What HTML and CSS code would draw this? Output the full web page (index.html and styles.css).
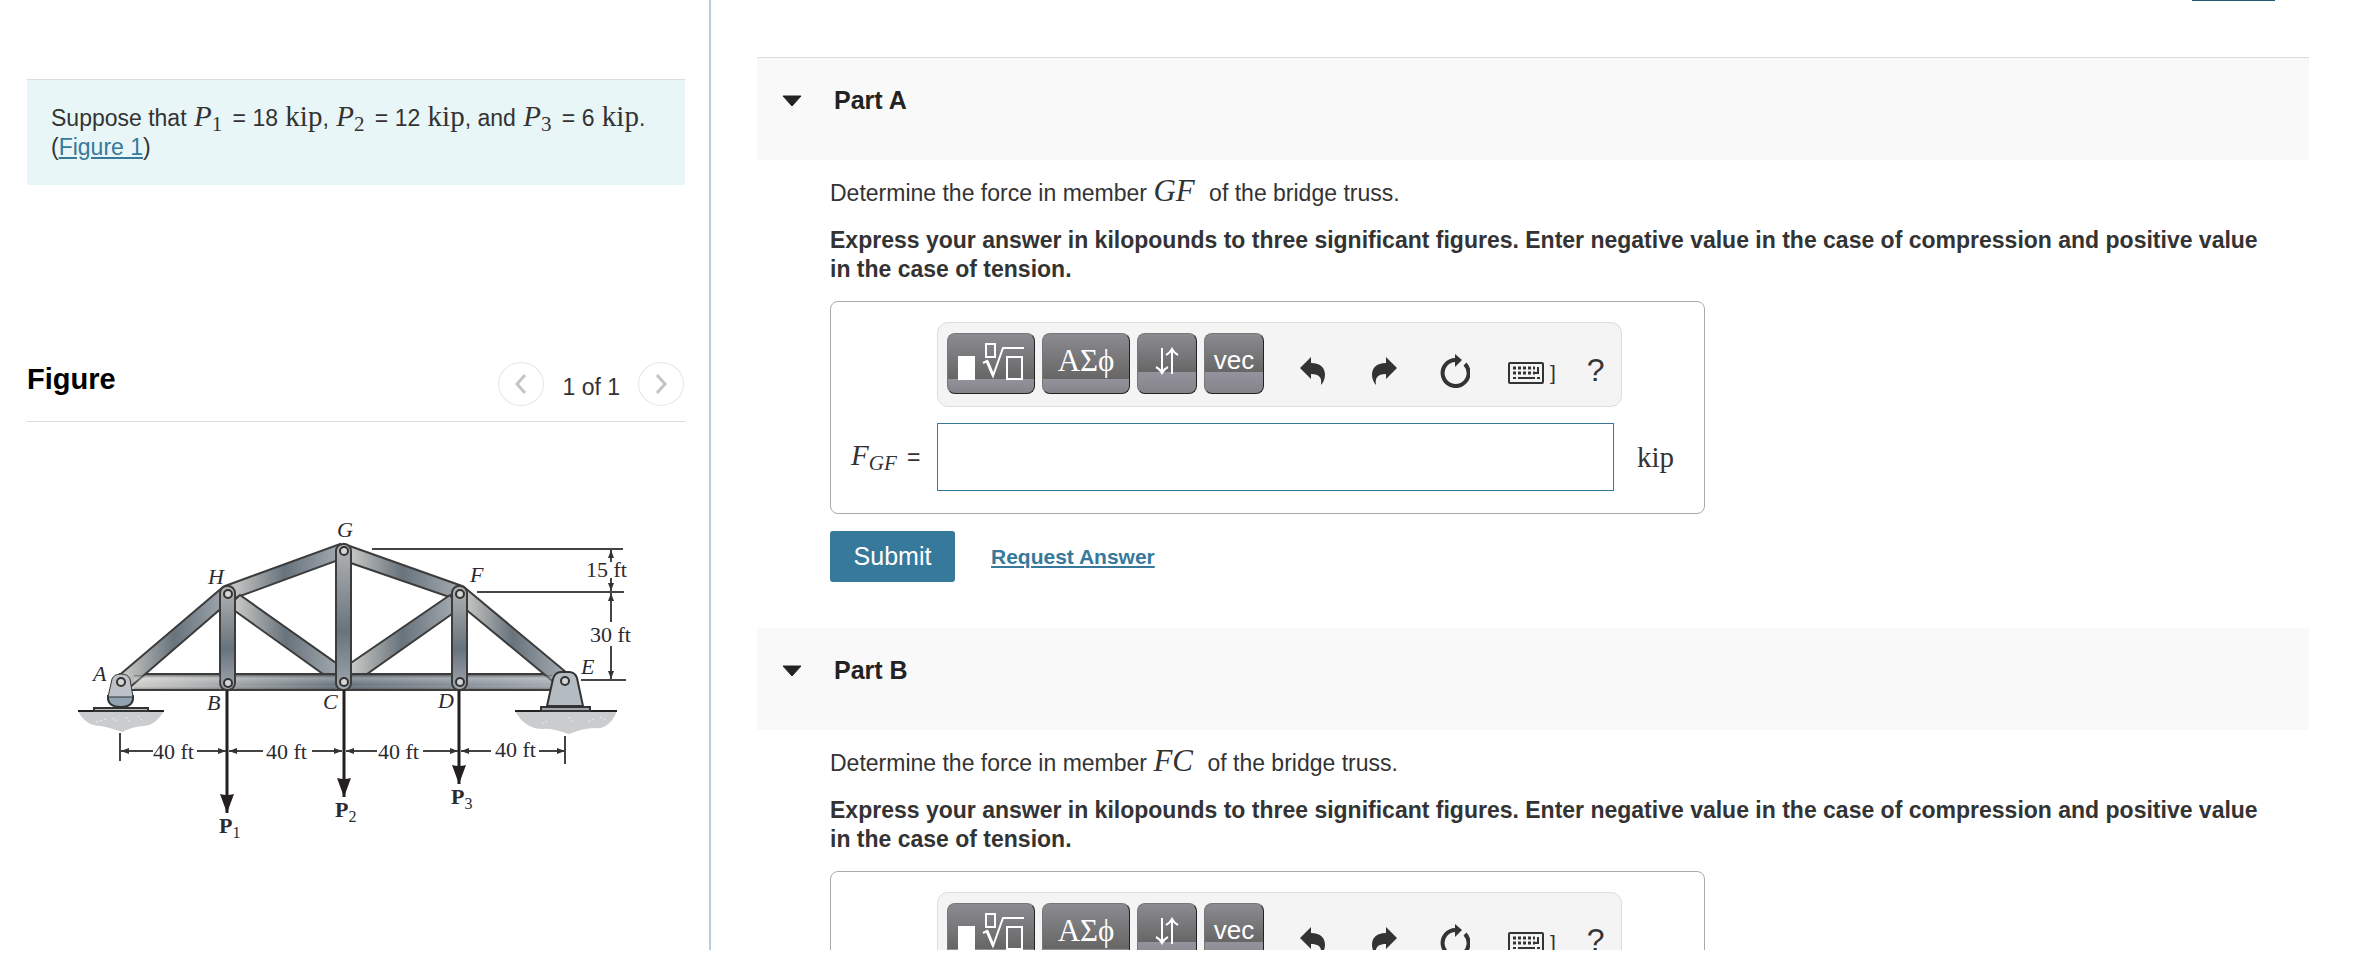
FILE: index.html
```html
<!DOCTYPE html>
<html lang="en">
<head>
  <meta charset="UTF-8">
  <meta name="viewport" content="width=device-width, initial-scale=1.0">
  <title>Bridge Truss</title>
  <link rel="stylesheet" href="styles.css">
</head>
<body>
  <!-- shared icons -->
  <svg class="defs" width="0" height="0" aria-hidden="true">
    <symbol id="caret" viewBox="0 0 20 12"><path d="M1 1h18l-9 10z" fill="#222" stroke="#222" stroke-linejoin="round"/></symbol>
    <symbol id="template" viewBox="0 0 68 40">
      <path d="M1 15h17v24H1z" fill="#fff"/>
      <path d="M29 3h9v13h-9zM50 16h15v22H50z" fill="none" stroke="#fff" stroke-width="2"/>
      <path d="M26 22l4-2 6 15 10-28h21" fill="none" stroke="#fff" stroke-width="2"/>
      <path d="M30 20l6 14" stroke="#fff" stroke-width="3"/>
    </symbol>
    <symbol id="updown" viewBox="0 0 24 28">
      <path d="M7 1v25M1 20q4 2 6 6 2-4 6-6M17 27V2M11 8q4-2 6-6 2 4 6 6" fill="none" stroke="#fff" stroke-width="2"/>
    </symbol>
    <symbol id="undo" viewBox="0 0 26 28"><path d="M0 11L11 0v6c10 0 14 5 14 12 0 4-2 8-4 10 1-7-1-11-10-11v5z" fill="#333"/></symbol>
    <symbol id="redo" viewBox="0 0 26 28"><path d="M26 11L15 0v6C5 6 1 11 1 18c0 4 2 8 4 10-1-7 1-11 10-11v5z" fill="#333"/></symbol>
    <symbol id="reset" viewBox="0 0 30 34">
      <path d="M16 6A13 13 0 1 0 25 10" fill="none" stroke="#333" stroke-width="4"/>
      <path d="M15 0l7 6-7 7z" fill="#333"/>
    </symbol>
    <symbol id="keyboard" viewBox="0 0 36 22">
      <rect x="1" y="1" width="34" height="20" rx="1" fill="none" stroke="#333" stroke-width="2"/>
      <path d="M5 6h22M5 11h22" fill="none" stroke="#333" stroke-width="3" stroke-dasharray="3 2"/>
      <path d="M30 5v6h-4M5 16h3M10 16h17M29 16h3" fill="none" stroke="#333" stroke-width="2"/>
    </symbol>
  </svg>

  <div class="page">
    <aside class="side">
      <section class="problem">
        Suppose that <span class="math"><i>P</i><sub>1</sub></span> = 18 <span class="math">kip</span>, <span class="math"><i>P</i><sub>2</sub></span> = 12 <span class="math">kip</span>, and <span class="math"><i>P</i><sub>3</sub></span> = 6 <span class="math">kip</span>.<br>
        (<a href="#figure">Figure 1</a>)
      </section>

      <section id="figure">
        <header class="figure-head">
          <h2>Figure</h2>
          <nav class="pager">
            <button type="button" aria-label="Previous figure"><svg width="12" height="20" viewBox="0 0 12 20"><path d="M10 1L2 10l8 9"/></svg></button>
            <span>1 of 1</span>
            <button type="button" aria-label="Next figure"><svg width="12" height="20" viewBox="0 0 12 20"><path d="M2 1l8 9-8 9"/></svg></button>
          </nav>
        </header>

        <svg class="truss" width="600" height="350" viewBox="0 0 600 350" role="img" aria-label="Bridge truss">
          <defs>
            <linearGradient id="steel">
              <stop offset="0" stop-color="#d6d5d0"/><stop offset=".5" stop-color="#68737c"/><stop offset="1" stop-color="#a7adb4"/>
            </linearGradient>
            <linearGradient id="steelV" x2="0" y2="1">
              <stop offset="0" stop-color="#b3b5b6"/><stop offset=".6" stop-color="#68737c"/><stop offset="1" stop-color="#a0a8b0"/>
            </linearGradient>
            <linearGradient id="shine" x2="0" y2="1">
              <stop offset="0" stop-color="#333" stop-opacity=".5"/><stop offset=".25" stop-color="#fff" stop-opacity=".25"/><stop offset=".7" stop-color="#fff" stop-opacity="0"/><stop offset="1" stop-color="#333" stop-opacity=".3"/>
            </linearGradient>
            <marker id="tip" viewBox="0 0 8 6" markerWidth="8" markerHeight="6" refX="8" refY="3" orient="auto-start-reverse" markerUnits="userSpaceOnUse">
              <path d="M0 0l8 3-8 3z" fill="#333"/>
            </marker>
            <marker id="load" viewBox="0 0 19 14" markerWidth="19" markerHeight="14" refX="19" refY="7" orient="auto" markerUnits="userSpaceOnUse">
              <path d="M0 0q2 7 0 14l19-7z" fill="#231f20"/>
            </marker>
          </defs>

          <!-- ground -->
          <path d="M18 211h86q-8 14-20 15-10 0-22 6-14-5-22-6-14 0-22-15z" fill="#cbccce"/>
          <path d="M455 211h102q-8 19-22 17-12 0-26 6-18-6-26-5-18 0-28-18z" fill="#cbccce"/>
          <path d="M36 222l10-3M52 218l6 3M66 217l4 5M78 216l6 6M482 224l6-3M509 217l3 5M528 222l6-3M540 217l6 3" stroke="#f0f0f0" stroke-dasharray="2 2"/>
          <path d="M18 211h86M455 211h102" stroke="#222" stroke-width="2"/>

          <!-- members -->
          <g stroke="#3c3c3c" stroke-width="2">
            <path d="M60 174h445v16H60z" fill="url(#steel)"/>
            <path d="M163 87L56 178l12 11L172 99z" fill="url(#steel)"/>
            <path d="M165 86L280 44l4 14-112 41z" fill="url(#steel)"/>
            <path d="M284 44l118 42-4 14-116-40z" fill="url(#steel)"/>
            <path d="M180 95l103 73-2 6h-18l-95-68z" fill="url(#steel)"/>
            <path d="M390 95l-105 72v7h22l92-65z" fill="url(#steel)"/>
            <path d="M404 87l103 86-6 15-103-85z" fill="url(#steel)"/>
            <rect x="160" y="86" width="15" height="104" rx="7" fill="url(#steelV)"/>
            <rect x="276" y="44" width="15" height="146" rx="7" fill="url(#steelV)"/>
            <rect x="392" y="86" width="15" height="104" rx="7" fill="url(#steelV)"/>
          </g>
          <path d="M74 175h86v14H74zM176 175h99v14h-99zM292 175h99v14h-99zM408 175h84v14h-84z" fill="url(#shine)"/>

          <!-- supports -->
          <g stroke="#333" stroke-width="2">
            <path d="M34 208h54v3H34z" fill="#b9bfc3"/>
            <path d="M48 196q-1 11 13 11 13 0 12-11z" fill="#8fa3b1"/>
            <path d="M48 197l4-18q2-5 9-5t9 5l3 18z" fill="#bcc2c7" stroke-width="1"/>
            <path d="M481 207h49v4h-49z" fill="#9fa7ac"/>
            <path d="M487 206l6-27q2-7 8-7h8q6 0 8 6l6 28z" fill="#b5bcc1"/>
          </g>

          <!-- pins -->
          <g fill="#d5d5d5" stroke="#333" stroke-width="2">
            <circle cx="61" cy="182" r="4"/><circle cx="168" cy="94" r="4"/><circle cx="168" cy="183" r="4"/>
            <circle cx="284" cy="51" r="4"/><circle cx="284" cy="182" r="4"/><circle cx="400" cy="94" r="4"/>
            <circle cx="400" cy="182" r="4"/><circle cx="505" cy="181" r="4"/>
          </g>

          <!-- loads -->
          <g stroke="#231f20" stroke-width="3">
            <path d="M167 190v123" marker-end="url(#load)"/>
            <path d="M284 190v107" marker-end="url(#load)"/>
            <path d="M399 190v94" marker-end="url(#load)"/>
          </g>

          <!-- dimensions -->
          <g stroke="#444" stroke-width="2">
            <path d="M60 233v28M505 236v28M312 49h251M417 92h147M521 180h45" />
            <g marker-start="url(#tip)">
              <path d="M61 251h32"/><path d="M169 251h34"/><path d="M286 251h31"/><path d="M401 251h30"/>
              <path d="M551 50v12"/><path d="M551 93v29"/>
            </g>
            <g marker-end="url(#tip)">
              <path d="M137 251h29"/><path d="M252 251h30"/><path d="M363 251h35"/><path d="M479 251h26"/>
              <path d="M551 78v13"/><path d="M551 146v33"/>
            </g>
          </g>
          <g class="dims">
            <text x="93" y="259">40 ft</text><text x="206" y="259">40 ft</text><text x="318" y="259">40 ft</text><text x="435" y="257">40 ft</text>
            <text x="526" y="77">15 ft</text><text x="530" y="142">30 ft</text>
          </g>
          <g class="joints">
            <text x="33" y="181">A</text><text x="147" y="210">B</text><text x="263" y="209">C</text><text x="378" y="208">D</text>
            <text x="521" y="174">E</text><text x="410" y="82">F</text><text x="277" y="37">G</text><text x="148" y="84">H</text>
          </g>
          <g class="forces">
            <text x="159" y="333">P<tspan class="idx" dy="5">1</tspan></text>
            <text x="275" y="317">P<tspan class="idx" dy="5">2</tspan></text>
            <text x="391" y="304">P<tspan class="idx" dy="5">3</tspan></text>
          </g>
        </svg>
      </section>
    </aside>

    <main class="content">
      <div class="top"><span class="top-link"></span></div>

      <section class="part">
        <h2 class="part-head first"><button type="button"><svg width="20" height="12"><use href="#caret"/></svg>Part A</button></h2>
        <div class="part-body">
          <p>Determine the force in member <i class="math member">GF</i> of the bridge truss.</p>
          <p class="instructions">Express your answer in kilopounds to three significant figures. Enter negative value in the case of compression and positive value in the case of tension.</p>
          <form>
            <div class="answer">
              <div class="toolbar">
                <button type="button" class="key wide" aria-label="Templates"><svg width="68" height="40"><use href="#template"/></svg></button>
                <button type="button" class="key wide greek">ΑΣϕ</button>
                <button type="button" class="key" aria-label="Subscript and superscript"><svg width="24" height="28"><use href="#updown"/></svg></button>
                <button type="button" class="key">vec</button>
                <div class="tools">
                  <button type="button" aria-label="Undo"><svg width="26" height="28"><use href="#undo"/></svg></button>
                  <button type="button" aria-label="Redo"><svg width="26" height="28"><use href="#redo"/></svg></button>
                  <button type="button" aria-label="Reset"><svg width="30" height="34"><use href="#reset"/></svg></button>
                  <button type="button" class="kbd" aria-label="Keyboard shortcuts"><svg width="36" height="22"><use href="#keyboard"/></svg>]</button>
                  <button type="button" class="help">?</button>
                </div>
              </div>
              <label for="answerA"><span class="math"><i>F</i><sub><i>GF</i></sub></span> =</label>
              <input type="text" id="answerA">
              <span class="unit">kip</span>
            </div>
            <div class="actions">
              <button type="submit">Submit</button>
              <a href="#">Request Answer</a>
            </div>
          </form>
        </div>
      </section>

      <section class="part">
        <h2 class="part-head"><button type="button"><svg width="20" height="12"><use href="#caret"/></svg>Part B</button></h2>
        <div class="part-body">
          <p>Determine the force in member <i class="math member">FC</i> of the bridge truss.</p>
          <p class="instructions">Express your answer in kilopounds to three significant figures. Enter negative value in the case of compression and positive value in the case of tension.</p>
          <form>
            <div class="answer">
              <div class="toolbar">
                <button type="button" class="key wide" aria-label="Templates"><svg width="68" height="40"><use href="#template"/></svg></button>
                <button type="button" class="key wide greek">ΑΣϕ</button>
                <button type="button" class="key" aria-label="Subscript and superscript"><svg width="24" height="28"><use href="#updown"/></svg></button>
                <button type="button" class="key">vec</button>
                <div class="tools">
                  <button type="button" aria-label="Undo"><svg width="26" height="28"><use href="#undo"/></svg></button>
                  <button type="button" aria-label="Redo"><svg width="26" height="28"><use href="#redo"/></svg></button>
                  <button type="button" aria-label="Reset"><svg width="30" height="34"><use href="#reset"/></svg></button>
                  <button type="button" class="kbd" aria-label="Keyboard shortcuts"><svg width="36" height="22"><use href="#keyboard"/></svg>]</button>
                  <button type="button" class="help">?</button>
                </div>
              </div>
            </div>
          </form>
        </div>
      </section>
    </main>
  </div>
</body>
</html>
```

FILE: styles.css
```css
* {
  box-sizing: border-box;
}

body {
  margin: 0;
  font-family: "Liberation Sans", Arial, sans-serif;
  font-size: 23px;
  line-height: 29px;
  color: #333;
  background: #fff;
}

button {
  font: inherit;
  color: inherit;
  padding: 0;
  border: none;
  background: none;
  cursor: pointer;
}

h2, p {
  margin: 0;
}

a {
  color: #36799b;
}

.defs {
  display: block;
}

/* two panes, each one is cut off at the bottom of the window */
.page {
  display: grid;
  grid-template-columns: 711px 1fr;
  height: 100vh;
  padding-bottom: 14px;
}

.side {
  padding: 79px 24px 0 27px;
  border-right: 2px solid #bccbdb;
  overflow: hidden;
}

.content {
  padding: 0 59px 0 46px;
  overflow: hidden;
}

.math {
  font-family: "Liberation Serif", "Times New Roman", serif;
  font-size: 29px;
  line-height: 24px;
}

.math sub {
  font-size: 21px;
  line-height: 0;
  vertical-align: -5px;
  margin-right: 4px;
}

.part-body .member {
  margin-right: 8px;
  font-size: 31px;
}

/* left pane */
.problem {
  height: 106px;
  padding: 24px;
  border-top: 1px solid #dcdfe0;
  background: #e9f6f7;
}

.problem .math {
  margin-left: 1px;
}

.figure-head {
  display: flex;
  justify-content: space-between;
  align-items: flex-start;
  margin-top: 177px;
  padding-bottom: 15px;
  border-bottom: 1px solid #ddd;
}

.figure-head h2 {
  font-size: 29px;
  line-height: 34px;
  color: #000;
}

.pager {
  display: flex;
  align-items: center;
  gap: 18px;
  padding-right: 1px;
}

.pager button {
  display: flex;
  align-items: center;
  justify-content: center;
  width: 46px;
  height: 44px;
  border: 1px solid #e6e6e6;
  border-radius: 50%;
}

.pager span {
  padding-top: 6px;
}

.pager path {
  fill: none;
  stroke: #c4c4c4;
  stroke-width: 3;
}

.truss {
  display: block;
  margin: 78px 0 0 33px;
  font-family: "Liberation Serif", "Times New Roman", serif;
  font-size: 22px;
  fill: #2b2a30;
}

.joints {
  font-style: italic;
}

.forces {
  font-weight: bold;
}

.idx {
  font-size: 16px;
  font-weight: normal;
}

/* right pane */
.top {
  display: flex;
  justify-content: flex-end;
  height: 57px;
  padding-right: 34px;
}

.top-link {
  width: 83px;
  height: 1px;
  background: #215e75;
}

.part-head {
  height: 102px;
  padding: 28px 25px;
  background: #f9f9f9;
  font-size: 25px;
  color: #222;
}

.part-head.first {
  height: 103px;
  border-top: 1px solid #ddd;
}

.part-head button {
  display: flex;
  align-items: center;
  gap: 32px;
}

.part-body {
  padding: 19px 0 46px 73px;
}

.instructions {
  margin: 18px 0 17px;
  padding-right: 50px;
  font-weight: bold;
}

.answer {
  display: grid;
  grid-template-columns: 86px 1fr 68px;
  max-width: 875px;
  padding: 20px 22px 22px 20px;
  border: 1px solid #aaa;
  border-radius: 8px;
}

.toolbar {
  grid-column: 2 / 4;
  display: flex;
  gap: 7px;
  width: 685px;
  height: 85px;
  margin-bottom: 16px;
  padding: 10px 9px;
  border: 1px solid #ddd;
  border-radius: 11px;
  background: #f4f4f4;
}

.key {
  display: flex;
  align-items: center;
  justify-content: center;
  width: 60px;
  height: 61px;
  padding-bottom: 6px;
  border: 1px solid #222;
  border-top-color: #777;
  border-left-color: #777;
  border-radius: 8px;
  background: linear-gradient(#8c8b91, #666 65%, #94929d 65%, #858489);
  color: #fff;
  font-size: 26px;
}

.key.wide {
  width: 88px;
  background: linear-gradient(#8c8b91, #666 76%, #94929d 76%, #858489);
}

.greek {
  font-family: "Liberation Serif", "Times New Roman", serif;
  font-size: 31px;
}

.tools {
  display: flex;
  align-items: center;
  gap: 35px;
  padding: 12px 0 0 24px;
}

.tools button {
  display: flex;
  align-items: center;
  justify-content: center;
  min-width: 36px;
}

.tools .kbd {
  gap: 6px;
  padding-top: 4px;
  font-size: 21px;
}

.tools .help {
  min-width: 0;
  margin-left: -4px;
  font-size: 32px;
}

label, .unit {
  align-self: center;
}

.answer input {
  width: 100%;
  height: 68px;
  padding: 0 12px;
  border: 1px solid #36799b;
  font: inherit;
}

.unit {
  padding-left: 23px;
  font-family: "Liberation Serif", "Times New Roman", serif;
  font-size: 29px;
}

.actions {
  display: flex;
  align-items: center;
  gap: 36px;
  margin-top: 17px;
}

.actions button {
  width: 125px;
  height: 51px;
  border-radius: 3px;
  background: #36799b;
  color: #fff;
  font-size: 25px;
}

.actions a {
  font-size: 21px;
  font-weight: bold;
}
```
